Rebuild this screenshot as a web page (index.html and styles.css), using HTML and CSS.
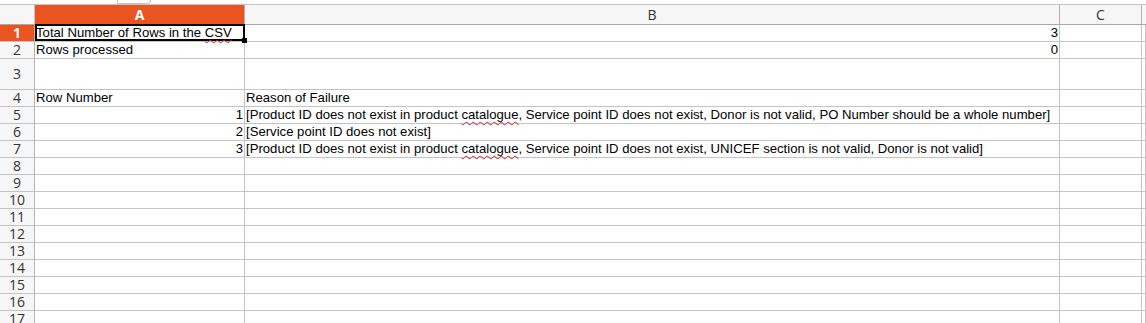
FILE: index.html
```html
<!DOCTYPE html>
<html>
<head>
    <meta charset="utf-8" />
    <title>Sheet</title>
    <link rel="stylesheet" href="styles.css">
</head>
<body>
    <div class="topbar"><div class="tab"></div></div>
    <div class="sheet">
        <div class="corner"></div>
        <div class="colhead active">A</div>
        <div class="colhead">B</div>
        <div class="colhead">C</div>
        <div class="colhead last"></div>

        <div class="rowhead active">1</div>
        <div class="cell selected"><span>Total Number of Rows in the <span class="typo">CSV</span></span></div>
        <div class="cell num">3</div>
        <div class="cell"></div>
        <div class="cell"></div>

        <div class="rowhead">2</div>
        <div class="cell">Rows processed</div>
        <div class="cell num">0</div>
        <div class="cell"></div>
        <div class="cell"></div>

        <div class="rowhead">3</div>
        <div class="cell"></div>
        <div class="cell"></div>
        <div class="cell"></div>
        <div class="cell"></div>

        <div class="rowhead">4</div>
        <div class="cell">Row Number</div>
        <div class="cell">Reason of Failure</div>
        <div class="cell"></div>
        <div class="cell"></div>

        <div class="rowhead">5</div>
        <div class="cell num">1</div>
        <div class="cell"><span>[Product ID does not exist in product <span class="typo">catalogue</span>, Service point ID does not exist, Donor is not valid, PO Number should be a whole number]</span></div>
        <div class="cell"></div>
        <div class="cell"></div>

        <div class="rowhead">6</div>
        <div class="cell num">2</div>
        <div class="cell">[Service point ID does not exist]</div>
        <div class="cell"></div>
        <div class="cell"></div>

        <div class="rowhead">7</div>
        <div class="cell num">3</div>
        <div class="cell"><span>[Product ID does not exist in product <span class="typo">catalogue</span>, Service point ID does not exist, UNICEF section is not valid, Donor is not valid]</span></div>
        <div class="cell"></div>
        <div class="cell"></div>
    </div>

    <script type="text/javascript">
        // empty rows 8..17
        var sheet = document.getElementsByClassName("sheet")[0];
        for (var r = 8; r <= 17; r++) {
            var head = document.createElement("div");
            head.className = "rowhead";
            head.textContent = r;
            sheet.appendChild(head);
            for (var c = 0; c < 4; c++) {
                var cell = document.createElement("div");
                cell.className = "cell";
                sheet.appendChild(cell);
            }
        }
    </script>
</body>
</html>
```

FILE: styles.css
```css
html, body { margin: 0; padding: 0; background: #fff; overflow: hidden; }
body { width: 1146px; height: 323px; }

.topbar { height: 5px; box-sizing: border-box; border-bottom: 1px solid #c4c4c4; display: flex; }
    .topbar .tab { margin-left: 117px; width: 34px; height: 4px; box-sizing: border-box; border-left: 1px solid #c4c4c4; border-right: 1px solid #c4c4c4; border-bottom: 1px solid #c4c4c4; border-bottom-right-radius: 4px; }

.sheet { display: grid; grid-template-columns: 35px 210px 815px 82px 1fr; grid-template-rows: 20px 17px 17px 31px; grid-auto-rows: 17px; }

.sheet > div { box-sizing: border-box; border-right: 1px solid #c4c4c4; border-bottom: 1px solid #c4c4c4; }

.corner, .colhead { background: #f6f6f6; border-bottom-color: #a8a8a8 !important; }
.colhead { font-family: "Open Sans", "DejaVu Sans", sans-serif; font-size: 14px; color: #333; display: flex; align-items: center; justify-content: center; border-right-color: #b4b4b4 !important; }
    .colhead.active { background: #e95420; color: #fff; font-weight: bold; }
    .colhead.last { border-right: none !important; }

.rowhead { background: #f6f6f6; font-family: "Open Sans", "DejaVu Sans", sans-serif; font-size: 14px; color: #333; display: flex; align-items: center; justify-content: center; border-right-color: #b4b4b4 !important; line-height: 16px; }
    .rowhead.active { background: #e95420; color: #fff; font-weight: bold; }

.cell { font-family: "Liberation Sans", Arial, sans-serif; font-size: 13.15px; color: #000; white-space: nowrap; display: flex; align-items: flex-end; padding: 0 1px 0 1px; line-height: 16px; overflow: visible; position: relative; }
    .cell.num { justify-content: flex-end; padding-right: 1px; }
    .cell > span { position: relative; z-index: 1; }

.typo { text-decoration: underline wavy #e01b24; text-decoration-thickness: 1px; text-underline-offset: 2px; text-decoration-skip-ink: none; }

.selected::after { content: ""; position: absolute; left: 0; top: -1px; right: -1px; bottom: 0; border: 2px solid #000; }
.selected::before { content: ""; position: absolute; right: -3px; bottom: -2px; width: 5px; height: 5px; background: #000; z-index: 2; }
```
